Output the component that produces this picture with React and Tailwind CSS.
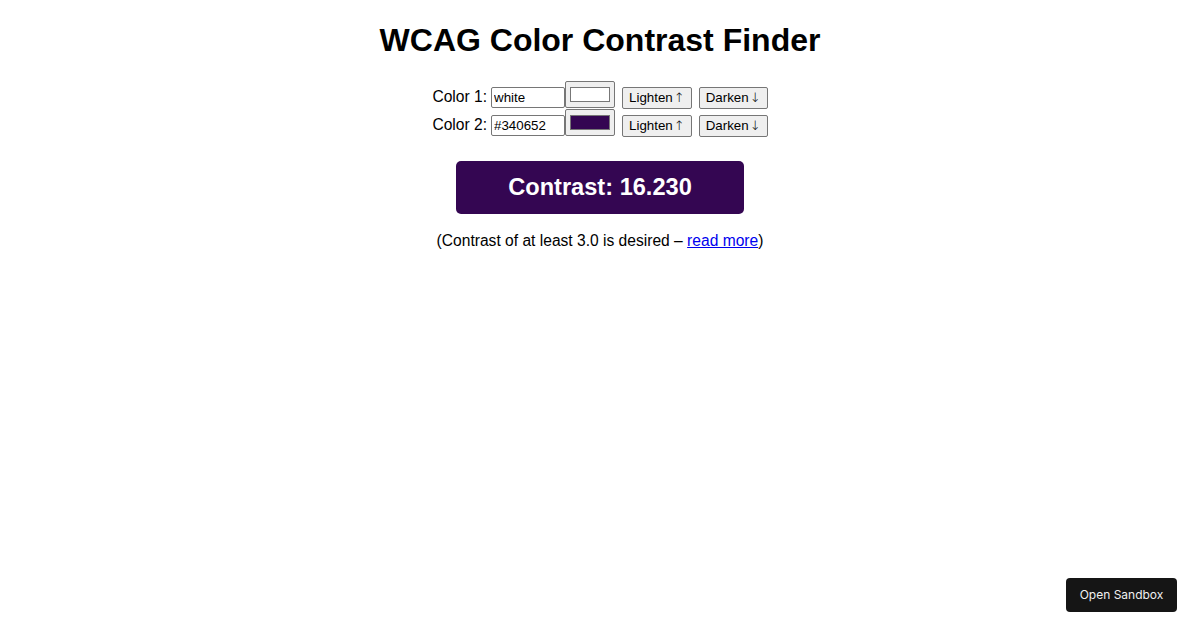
import { useState } from 'react';

const ColorRow = ({ label, value, swatch }) => (
  <div className="flex items-end h-[28px]">
    <span className="text-[15.6px] leading-[18px] mb-[3px] mr-[4px]">{label}</span>
    <input
      type="text"
      defaultValue={value}
      className="w-[74px] h-[21px] mb-[1px] px-[2px] text-[13.33px] border border-[#767676] rounded-[2px] bg-white text-black outline-none"
    />
    <div className="w-[50px] h-[27px] mb-[1px] flex items-center justify-center bg-[#efefef] border border-[#767676] rounded-[2px]">
      <div className="w-[40px] h-[15px] border border-[#777777]" style={{ background: swatch }} />
    </div>
    <button className="ml-[7px] h-[22px] px-[6px] text-[13.33px] leading-[16px] bg-[#efefef] border border-[#767676] rounded-[2px] flex items-center">
      Lighten<span className="ml-[1px] font-['DejaVu_Sans',sans-serif] text-[13px] font-light">↑</span>
    </button>
    <button className="ml-[7px] h-[22px] px-[6px] text-[13.33px] leading-[16px] bg-[#efefef] border border-[#767676] rounded-[2px] flex items-center">
      Darken<span className="ml-[1px] font-['DejaVu_Sans',sans-serif] text-[13px] font-light">↓</span>
    </button>
  </div>
);

export default function App() {
  const [ratio] = useState('16.230');

  return (
    <div className="min-h-[630px] bg-white text-black font-['Liberation_Sans',Arial,sans-serif] flex flex-col items-center">
      <h1 className="mt-[22px] mb-[22px] text-[32px] leading-[37px] font-bold">WCAG Color Contrast Finder</h1>

      <div className="flex flex-col items-center">
        <ColorRow label="Color 1:" value="white" swatch="#ffffff" />
        <ColorRow label="Color 2:" value="#340652" swatch="#340652" />
      </div>

      <div className="mt-[24px] w-[288px] h-[53px] rounded-[5px] bg-[#340652] flex items-center justify-center">
        <span className="text-white text-[23.6px] font-bold">Contrast: {ratio}</span>
      </div>

      <p className="mt-[18px] text-[15.6px] leading-[18px]">
        (Contrast of at least 3.0 is desired – <a href="#" className="text-[#0000ee] underline">read more</a>)
      </p>

      <button className="fixed right-[23px] bottom-[18px] w-[111px] h-[34px] rounded-[4px] bg-[#151515] text-[#f0f0f0] text-[12px] font-['Inter',sans-serif]">
        Open Sandbox
      </button>
    </div>
  );
}
